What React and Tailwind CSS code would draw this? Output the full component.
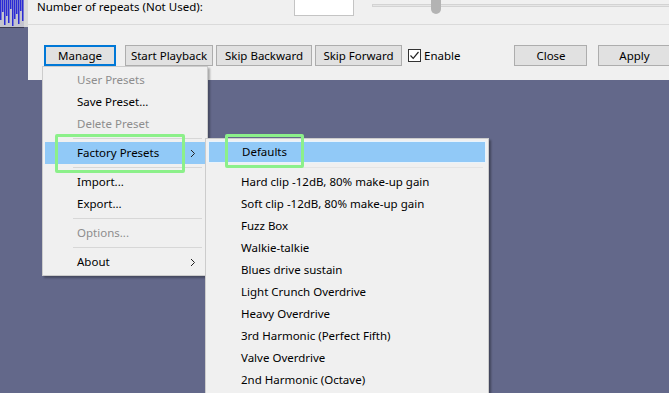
import React from "react";

const font = { fontFamily: '"Segoe UI", "Noto Sans", "Open Sans", sans-serif' };

function Btn({ children, className = "" }) {
  return (
    <div
      className={`h-[21px] flex items-center justify-center bg-[#e1e1e1] border border-[#adadad] text-[11.5px] text-black ${className}`}
    >
      {children}
    </div>
  );
}

function MenuRow({ label, disabled, active, arrow }) {
  return (
    <div
      className={`relative h-[22px] flex items-center pl-[32px] pr-[8px] text-[11.5px] ${
        active ? "bg-[#91c9f7]" : ""
      } ${disabled ? "text-[#8d8d8d]" : "text-black"}`}
    >
      <span className="flex-1 leading-none">{label}</span>
      {arrow && (
        <svg width="6" height="9" viewBox="0 0 6 9" className="mr-[1px]">
          <path d="M1 1 L4.5 4.5 L1 8" fill="none" stroke="#222" strokeWidth="1" />
        </svg>
      )}
    </div>
  );
}

function Sep({ inset = 28 }) {
  return (
    <div className="h-[7px] flex items-center">
      <div className="h-px bg-[#d7d7d7] flex-1 mr-[3px]" style={{ marginLeft: inset }} />
    </div>
  );
}

function Waveform() {
  const hs = [20, 12, 25, 16, 23, 9, 26, 19, 14, 24, 11, 21];
  return (
    <svg width="24" height="27" viewBox="0 0 24 27" className="block">
      <rect width="24" height="27" fill="#c4c4cf" />
      {hs.map((h, i) => (
        <rect key={i} x={i * 2} y={0} width="1.5" height={h} fill="#2b2bd4" />
      ))}
    </svg>
  );
}

export default function App() {
  const factory = [
    "Hard clip -12dB, 80% make-up gain",
    "Soft clip -12dB, 80% make-up gain",
    "Fuzz Box",
    "Walkie-talkie",
    "Blues drive sustain",
    "Light Crunch Overdrive",
    "Heavy Overdrive",
    "3rd Harmonic (Perfect Fifth)",
    "Valve Overdrive",
    "2nd Harmonic (Octave)",
  ];
  return (
    <div className="relative w-[669px] h-[393px] overflow-hidden bg-[#63688a]" style={font}>
      {/* top strip */}
      <div className="flex items-start">
        <div className="w-[28px] flex flex-col">
          <div className="flex">
            <Waveform />
            <div className="w-[4px] h-[27px] bg-[#d9d9d9]" />
          </div>
          <div className="h-px w-[24px] bg-[#3c3c50]" />
        </div>
        {/* dialog */}
        <div className="flex-1 h-[80px] bg-[#f0f0f0] flex flex-col">
          <div className="h-[25px] flex items-start border-b border-[#dadada]">
            <div className="ml-[9px] w-[257px] text-[11.5px] leading-[14px] text-black">
              Number of repeats (Not Used):
            </div>
            <div className="w-[60px] h-[17px] -mt-[1px] bg-white border border-[#c4c4c4]" />
            <div className="relative ml-[18px] flex-1 h-[16px]">
              <div className="absolute left-0 right-0 top-[4px] h-[3px] bg-[#e6e6e6] border border-[#d3d3d3]" />
              <div className="absolute left-[59px] top-0 w-[10px] h-[14px] bg-[#b3b3b3] rounded-b-[5px]" />
            </div>
          </div>
          <div className="flex items-center mt-[20px] ml-[16px]">
            <div className="w-[72px] h-[21px] flex items-center justify-center bg-[#e1e1e1] border-2 border-[#0078d7] text-[11.5px] text-black">
              Manage
            </div>
            <Btn className="ml-[9px] w-[88px]">Start Playback</Btn>
            <Btn className="ml-[3px] w-[96px]">Skip Backward</Btn>
            <Btn className="ml-[3px] w-[87px]">Skip Forward</Btn>
            <div className="ml-[6px] flex items-center text-[11.5px] text-black">
              <div className="w-[13px] h-[13px] bg-white border border-[#333] flex items-center justify-center">
                <svg width="11" height="11" viewBox="0 0 11 11">
                  <path d="M1.5 5.5 L4.2 8.3 L9.5 2" fill="none" stroke="#222" strokeWidth="1.2" />
                </svg>
              </div>
              <span className="ml-[3px]">Enable</span>
            </div>
            <Btn className="ml-[54px] w-[73px]">Close</Btn>
            <Btn className="ml-[11px] w-[72px]">Apply</Btn>
          </div>
        </div>
      </div>

      {/* Manage menu */}
      <div className="absolute left-[42px] top-[66px] w-[166px] bg-[#f0f0f0] border border-[#cccccc] shadow-[2px_2px_2px_rgba(0,0,0,0.3)] p-[2px]">
        <MenuRow label="User Presets" disabled />
        <MenuRow label="Save Preset..." />
        <MenuRow label="Delete Preset" disabled />
        <Sep />
        <MenuRow label="Factory Presets" active arrow />
        <Sep />
        <MenuRow label="Import..." />
        <MenuRow label="Export..." />
        <Sep />
        <MenuRow label="Options..." disabled />
        <Sep />
        <MenuRow label="About" arrow />
      </div>

      {/* Factory submenu */}
      <div className="absolute left-[205px] top-[138px] w-[284px] h-[270px] bg-[#f0f0f0] border border-[#cccccc] shadow-[2px_2px_2px_rgba(0,0,0,0.35)] p-[2px]">
        <div className="border border-[#e8f3fc]">
          <div className="h-[20px] bg-[#91c9f7] flex items-center pl-[33px] text-[11.5px] text-black">Defaults</div>
        </div>
        <div className="h-[8px] flex items-center">
          <div className="h-px bg-[#e4e4e4] flex-1 ml-[28px] mr-[3px]" />
        </div>
        {factory.map((f) => (
          <div key={f} className="h-[22px] flex items-center pl-[33px] text-[11.5px] text-black">
            {f}
          </div>
        ))}
      </div>

      {/* green annotation boxes */}
      <div className="absolute left-[55px] top-[134px] w-[130px] h-[39px] border-[3px] border-[#8cf08a] rounded-[2px]" />
      <div className="absolute left-[225px] top-[134px] w-[79px] h-[34px] border-[3px] border-[#8cf08a] rounded-[2px]" />
    </div>
  );
}
